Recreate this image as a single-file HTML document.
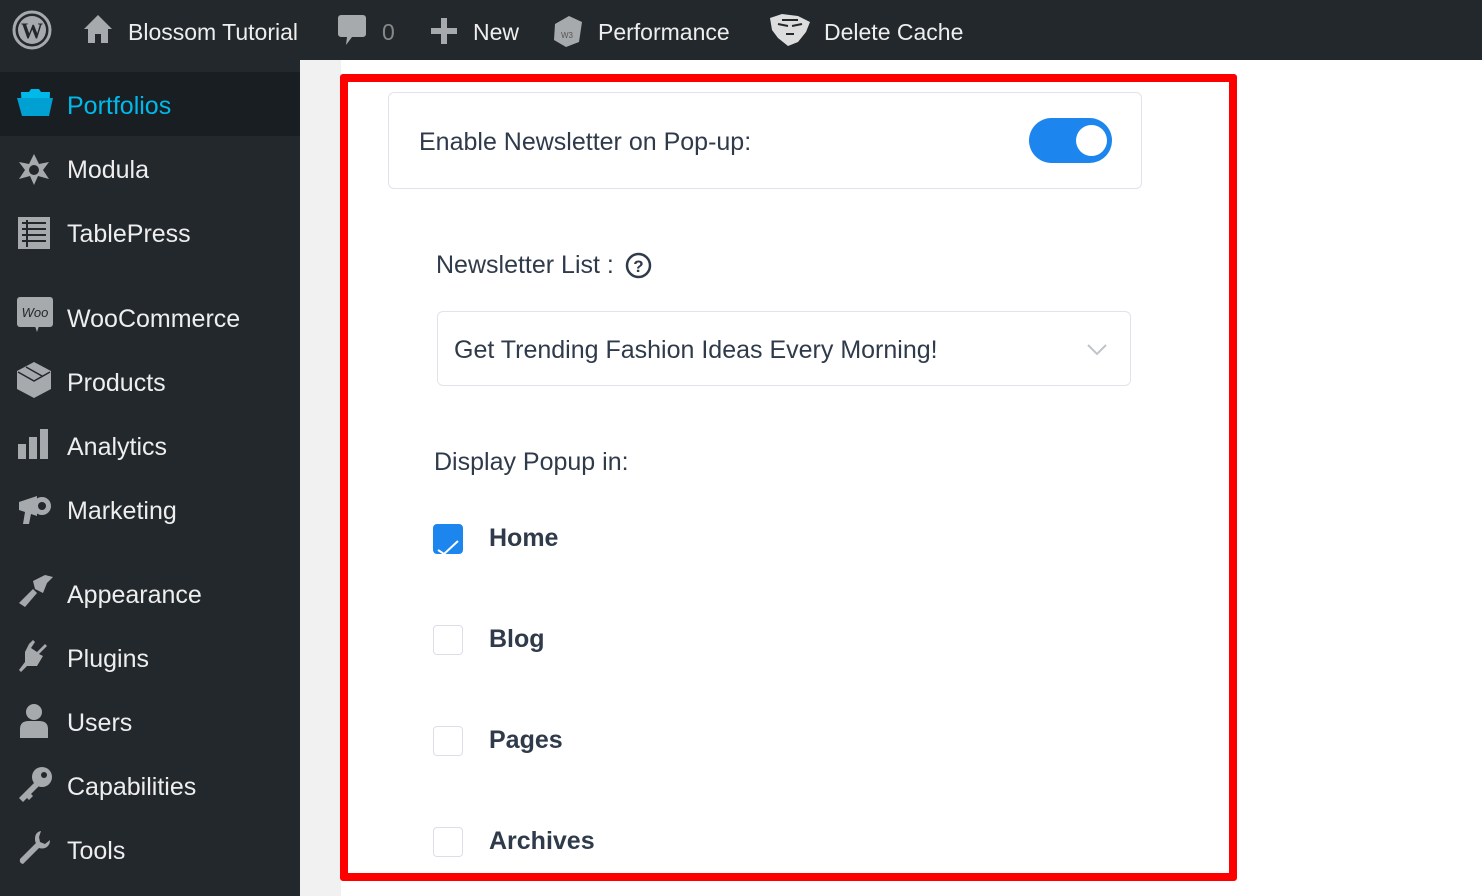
<!DOCTYPE html>
<html><head><meta charset="utf-8"><style>
*{margin:0;padding:0;box-sizing:border-box}
body{width:1482px;height:896px;overflow:hidden;background:#fff;font-family:"Liberation Sans","DejaVu Sans",sans-serif;position:relative}
#bar{position:absolute;left:0;top:0;width:1482px;height:60px;background:#23282d;color:#eee;font-size:23px}
#bar span{position:absolute;top:19px;white-space:nowrap}
#bar svg{position:absolute}
#side{position:absolute;left:0;top:60px;width:300px;height:836px;background:#23282d}
#gray{position:absolute;left:300px;top:60px;width:41px;height:836px;background:#f1f1f1}
.mi{position:absolute;left:67px;font-size:25px;color:#eee;white-space:nowrap;margin-top:2px}
.ic{position:absolute;left:17px}
#red{position:absolute;left:340px;top:74px;width:897px;height:807px;border:8px solid #f00;border-radius:3px}
.t{position:absolute;color:#2f3a4a;white-space:nowrap;margin-top:2px}
.cb{position:absolute;left:433px;width:30px;height:30px;border:1px solid #dcdfe6;border-radius:4px;background:#fff}
.lb{position:absolute;left:489px;font-size:25px;font-weight:bold;color:#2f3a4a;margin-top:2px}
</style></head><body>
<div id="bar">
<svg style="left:12px;top:10px" width="40" height="40" viewBox="0 0 40 40"><circle cx="20" cy="20" r="18" fill="none" stroke="#a7aaad" stroke-width="3"/><circle cx="20" cy="20" r="14" fill="#a7aaad"/><text x="20" y="28" font-size="22" font-weight="bold" text-anchor="middle" fill="#23282d" font-family="Liberation Serif">W</text></svg>
<svg style="left:82px;top:13px" width="32" height="32" viewBox="0 0 32 32"><path d="M16 2 L2 16 L6 16 L6 30 L13 30 L13 21 L19 21 L19 30 L26 30 L26 16 L30 16 Z" fill="#a7aaad"/></svg>
<span style="left:128px">Blossom Tutorial</span>
<svg style="left:338px;top:14px" width="30" height="34" viewBox="0 0 30 34"><path d="M3 1 H25 A3 3 0 0 1 28 4 V20 A3 3 0 0 1 25 23 H14 L8 31 L9 23 H3 A3 3 0 0 1 0 20 V4 A3 3 0 0 1 3 1Z" fill="#a7aaad"/></svg>
<span style="left:382px;color:#888">0</span>
<svg style="left:430px;top:18px" width="28" height="28" viewBox="0 0 28 28"><rect x="11" y="0" width="6" height="26" fill="#a7aaad"/><rect x="1" y="10" width="26" height="6" fill="#a7aaad"/></svg>
<span style="left:473px">New</span>
<svg style="left:551px;top:14px" width="34" height="34" viewBox="0 0 34 34"><path d="M4 10 L18 2 L31 8 L28 28 L15 33 L3 26Z" fill="#a7aaad"/><text x="10" y="24" font-size="8" fill="#555">W3</text></svg>
<span style="left:598px">Performance</span>
<svg style="left:768px;top:12px" width="44" height="36" viewBox="0 0 44 36"><path d="M2 6 L14 2 L30 4 L42 10 L38 20 L30 30 L20 34 L10 26 L4 18Z" fill="#ddd"/><path d="M10 12 L20 14 M24 14 L34 12 M18 22 L26 22 M14 8 L30 8" stroke="#23282d" stroke-width="2"/></svg>
<span style="left:824px">Delete Cache</span>
</div>
<div id="side">
<div style="position:absolute;left:0;top:12px;width:300px;height:64px;background:#191e23"></div>
<svg class="ic" style="top:28px" width="36" height="30" viewBox="0 0 36 30"><path d="M4 4 H12 L14 1 H22 L24 4 H33 L32 28 H5Z" fill="#00b9eb"/><path d="M0 10 H36 L32 28 H5Z" fill="#00a0d2"/></svg>
<div class="mi" style="top:30px;color:#00b9eb">Portfolios</div>
<svg class="ic" style="top:92px" width="34" height="34" viewBox="0 0 34 34"><path d="M17 2 L22 12 L32 10 L26 18 L32 27 L21 24 L17 33 L13 24 L2 27 L8 18 L2 10 L12 12Z" fill="#a7aaad"/><circle cx="17" cy="18" r="5" fill="#23282d"/></svg>
<div class="mi" style="top:94px">Modula</div>
<svg class="ic" style="top:156px" width="34" height="34" viewBox="0 0 34 34"><rect x="1" y="1" width="32" height="32" fill="#a7aaad"/><path d="M5 7H29M5 13H29M5 19H29M5 25H29M10 4V31" stroke="#23282d" stroke-width="2"/></svg>
<div class="mi" style="top:158px">TablePress</div>
<svg class="ic" style="top:237px" width="36" height="36" viewBox="0 0 36 36"><rect x="0" y="0" width="36" height="30" rx="3" fill="#a7aaad"/><path d="M18 29 L22 29 L20 35Z" fill="#a7aaad"/><text x="18" y="20" font-size="13" text-anchor="middle" fill="#23282d" font-style="italic">Woo</text></svg>
<div class="mi" style="top:243px">WooCommerce</div>
<svg class="ic" style="top:301px" width="34" height="38" viewBox="0 0 34 38"><path d="M17 1 L34 10 L34 28 L17 37 L0 28 L0 10Z" fill="#a7aaad"/><path d="M1 11 L17 20 L33 11 M9 6 L25 15" stroke="#23282d" stroke-width="1.5" fill="none"/></svg>
<div class="mi" style="top:307px">Products</div>
<svg class="ic" style="top:368px" width="34" height="32" viewBox="0 0 34 32"><rect x="1" y="16" width="8" height="15" fill="#a7aaad"/><rect x="12" y="9" width="8" height="22" fill="#a7aaad"/><rect x="23" y="1" width="8" height="30" fill="#a7aaad"/></svg>
<div class="mi" style="top:371px">Analytics</div>
<svg class="ic" style="top:430px" width="36" height="36" viewBox="0 0 36 36"><path d="M2 12 L20 6 L20 26 L14 24 L12 34 L6 34 L8 22 L2 20Z" fill="#a7aaad"/><circle cx="25" cy="16" r="9" fill="#a7aaad"/><circle cx="25" cy="16" r="4" fill="#23282d"/></svg>
<div class="mi" style="top:435px">Marketing</div>
<svg class="ic" style="top:513px" width="38" height="36" viewBox="0 0 38 36"><path d="M16 8 L28 2 L36 4 L30 10 L26 20 L18 16Z" fill="#a7aaad"/><path d="M16 16 L20 20 L8 34 L2 30Z" fill="#a7aaad"/></svg>
<div class="mi" style="top:519px">Appearance</div>
<svg class="ic" style="top:580px" width="34" height="34" viewBox="0 0 34 34"><path d="M12 4 L16 0 L18 2 L14 8 L20 12 L28 4 L30 6 L22 14 L26 16 L20 26 L10 26 L4 32 L2 30 L8 22 L8 12Z" fill="#a7aaad"/></svg>
<div class="mi" style="top:583px">Plugins</div>
<svg class="ic" style="top:643px" width="34" height="36" viewBox="0 0 34 36"><circle cx="17" cy="9" r="8" fill="#a7aaad"/><path d="M3 35 V26 Q3 18 12 18 H22 Q31 18 31 26 V35Z" fill="#a7aaad"/></svg>
<div class="mi" style="top:647px">Users</div>
<svg class="ic" style="top:706px" width="36" height="36" viewBox="0 0 36 36"><circle cx="25" cy="11" r="10" fill="#a7aaad"/><circle cx="27" cy="9" r="3" fill="#23282d"/><path d="M18 16 L2 32 L6 36 L10 32 L12 34 L16 30 L14 28 L22 20Z" fill="#a7aaad"/></svg>
<div class="mi" style="top:711px">Capabilities</div>
<svg class="ic" style="top:770px" width="34" height="36" viewBox="0 0 34 36"><path d="M24 1 Q18 2 18 9 Q18 12 19 13 L3 29 Q2 33 6 34 L22 18 Q25 19 28 18 Q33 16 33 10 L28 14 L23 12 L22 7Z" fill="#a7aaad"/></svg>
<div class="mi" style="top:775px">Tools</div>
</div>
<div id="gray"></div>
<div style="position:absolute;left:341px;top:881px;width:1141px;height:15px;background:#fff"></div>
<div id="red"></div>
<div style="position:absolute;left:388px;top:92px;width:754px;height:97px;border:1px solid #e1e3ea;border-radius:6px"></div>
<div class="t" style="left:419px;top:126px;font-size:25px">Enable Newsletter on Pop-up:</div>
<div style="position:absolute;left:1029px;top:118px;width:83px;height:45px;border-radius:23px;background:#1c86ee"></div>
<div style="position:absolute;left:1076px;top:125px;width:31px;height:31px;border-radius:50%;background:#fff"></div>
<div class="t" style="left:436px;top:249px;font-size:25px">Newsletter List :</div>
<svg style="position:absolute;left:625px;top:252px" width="27" height="27" viewBox="0 0 27 27"><circle cx="13.5" cy="13.5" r="11.5" fill="none" stroke="#2f3a4a" stroke-width="2.5"/><text x="13.5" y="20" font-size="17" font-weight="bold" text-anchor="middle" fill="#2f3a4a">?</text></svg>
<div style="position:absolute;left:437px;top:311px;width:694px;height:75px;border:1px solid #e1e3ea;border-radius:6px"></div>
<div class="t" style="left:454px;top:334px;font-size:25px">Get Trending Fashion Ideas Every Morning!</div>
<svg style="position:absolute;left:1086px;top:343px" width="22" height="14" viewBox="0 0 22 14"><path d="M2 2 L11 11 L20 2" fill="none" stroke="#c0c4cc" stroke-width="2"/></svg>
<div class="t" style="left:434px;top:446px;font-size:25px">Display Popup in:</div>
<div class="cb" style="top:524px;background:#1c86ee;border-color:#1c86ee"></div>
<svg style="position:absolute;left:436px;top:538px" width="26" height="16" viewBox="0 0 26 16"><path d="M2 12 L8 16 M8 16 L22 3" stroke="#fff" stroke-width="2"/></svg>
<div class="lb" style="top:522px">Home</div>
<div class="cb" style="top:625px"></div><div class="lb" style="top:623px">Blog</div>
<div class="cb" style="top:726px"></div><div class="lb" style="top:724px">Pages</div>
<div class="cb" style="top:827px"></div><div class="lb" style="top:825px">Archives</div>
</body></html>
